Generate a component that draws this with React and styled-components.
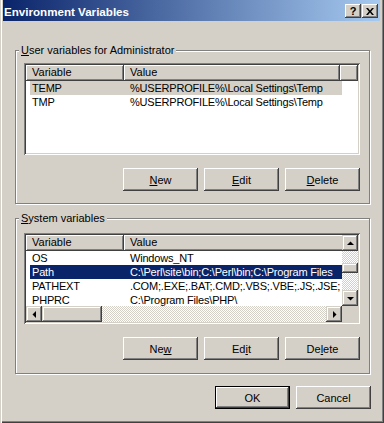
import React from "react";
import styled, { createGlobalStyle, css } from "styled-components";

const GlobalStyle = createGlobalStyle`
  html, body {
    margin: 0;
    padding: 0;
    background: #d4d0c8;
  }
  body {
    font-family: "Liberation Sans", Arial, sans-serif;
    font-size: 11px;
    color: #000;
  }
  * {
    box-sizing: border-box;
  }
`;

const raised = css`
  background: #d4d0c8;
  box-shadow: inset -1px -1px #404040, inset 1px 1px #fff,
    inset -2px -2px #808080, inset 2px 2px #d4d0c8;
`;

const scrollRaised = css`
  background: #d4d0c8;
  box-shadow: inset -1px -1px #404040, inset 1px 1px #d4d0c8,
    inset -2px -2px #808080, inset 2px 2px #fff;
`;

const Window = styled.div`
  width: 384px;
  height: 423px;
  padding: 0 4px 3px 3px;
  background: #d4d0c8;
  box-shadow: inset 1px 0 #d4d0c8, inset 2px 0 #fff, inset -1px -1px #404040,
    inset -2px -2px #808080;
  display: flex;
  flex-direction: column;
`;

const TitleBar = styled.div`
  height: 21px;
  flex: none;
  display: flex;
  align-items: center;
  padding: 3px 2px 2px 1px;
  background: linear-gradient(to right, #0a246a, #a6caf0);
`;

const Title = styled.span`
  flex: 1;
  color: #fff;
  font-weight: bold;
  font-size: 11.6px;
  white-space: nowrap;
`;

const CaptionButtons = styled.div`
  display: flex;
  gap: 1px;
`;

const CaptionButton = styled.div`
  width: 16px;
  height: 14px;
  display: flex;
  align-items: center;
  justify-content: center;
  font-weight: bold;
  font-size: 11px;
  line-height: 14px;
  color: #000;
  ${raised};
`;

const Client = styled.div`
  display: flex;
  flex-direction: column;
  padding: 29px 9px 0 12px;
`;

const Group = styled.div`
  position: relative;
  margin-right: 1px;
  padding: ${(p) => p.$top}px 9px ${(p) => p.$bottom}px 8px;
  border: 1px solid #808080;
  box-shadow: inset 1px 1px #fff, 1px 1px #fff;
  & + & {
    margin-top: 14px;
  }
`;

const Legend = styled.span`
  position: absolute;
  top: -7px;
  left: 3px;
  padding: 0 2px;
  line-height: 13px;
  background: #d4d0c8;
  white-space: nowrap;
`;

const Key = styled.span`
  text-decoration: underline;
`;

const sunken = css`
  padding: 2px;
  background: #fff;
  box-shadow: inset 1px 1px #808080, inset -1px -1px #fff, inset 2px 2px #404040,
    inset -2px -2px #d4d0c8;
`;

const ListView = styled.div`
  height: ${(p) => p.$h}px;
  display: flex;
  flex-direction: column;
  overflow: hidden;
  ${sunken};
`;

const ScrollList = styled.div`
  height: ${(p) => p.$h}px;
  display: grid;
  grid-template-columns: 1fr 16px;
  grid-template-rows: 1fr 16px;
  ${sunken};
`;

const Viewport = styled.div`
  overflow: hidden;
  min-width: 0;
`;

const Header = styled.div`
  display: flex;
  height: 16px;
`;

const HeadCell = styled.div`
  flex: ${(p) => (p.$w ? "none" : 1)};
  width: ${(p) => (p.$w ? `${p.$w}px` : "auto")};
  height: 16px;
  padding-left: 6px;
  line-height: 15px;
  white-space: nowrap;
  overflow: hidden;
  ${raised};
`;

const Row = styled.div`
  display: flex;
  width: ${(p) => p.$w}px;
  height: 14px;
  line-height: 14px;
  margin-left: 4px;
  white-space: nowrap;
  letter-spacing: -0.2px;
  background: ${(p) =>
    p.$sel === "focus" ? "#0a246a" : p.$sel ? "#d4d0c8" : "transparent"};
  color: ${(p) => (p.$sel === "focus" ? "#fff" : "#000")};
`;

const VarCell = styled.span`
  width: 94px;
  flex: none;
  padding-left: 2px;
  overflow: hidden;
`;

const ValCell = styled.span`
  padding-left: 6px;
`;

const VScroll = styled.div`
  display: flex;
  flex-direction: column;
`;

const HScroll = styled.div`
  display: flex;
`;

const Track = styled.div`
  flex: 1;
  display: flex;
  flex-direction: ${(p) => (p.$vertical ? "column" : "row")};
  background: repeating-conic-gradient(#fff 0 25%, #d4d0c8 0 50%) 0 0 / 2px 2px;
`;

const Thumb = styled.div`
  flex: none;
  ${(p) =>
    p.$vertical
      ? css`
          margin-top: ${p.$offset}px;
          height: ${p.$size}px;
        `
      : css`
          margin-left: ${p.$offset}px;
          width: ${p.$size}px;
        `}
  ${scrollRaised};
`;

const ScrollButton = styled.div`
  width: 16px;
  height: 16px;
  flex: none;
  display: flex;
  align-items: center;
  justify-content: center;
  ${scrollRaised};
`;

const Corner = styled.div`
  background: #d4d0c8;
`;

const ButtonRow = styled.div`
  display: flex;
  justify-content: flex-end;
  gap: 6px;
  margin-top: ${(p) => p.$gap}px;
`;

const Button = styled.button`
  width: 75px;
  height: 23px;
  padding: 0;
  border: none;
  font-family: "Liberation Sans", Arial, sans-serif;
  font-size: 11px;
  color: #000;
  ${raised};
  ${(p) =>
    p.$default &&
    css`
      border: 1px solid #000;
      box-shadow: inset -1px -1px #404040, inset 1px 1px #fff,
        inset -2px -2px #808080;
    `}
`;

const rotations = { up: 0, right: 90, down: 180, left: 270 };

const Arrow = ({ dir }) => (
  <svg
    width="7"
    height="7"
    viewBox="0 0 7 7"
    style={{ transform: `rotate(${rotations[dir]}deg)` }}
  >
    <path d="M3.5 1.5L7 5H0Z" fill="#000" />
  </svg>
);

const CloseGlyph = () => (
  <svg width="8" height="7" viewBox="0 0 8 7">
    <path
      d="M0 0H2L4 2.4L6 0H8L5.1 3.5L8 7H6L4 4.6L2 7H0L2.9 3.5Z"
      fill="#000"
    />
  </svg>
);

const userVars = [
  { name: "TEMP", value: "%USERPROFILE%\\Local Settings\\Temp", sel: true },
  { name: "TMP", value: "%USERPROFILE%\\Local Settings\\Temp" },
];

const systemVars = [
  { name: "OS", value: "Windows_NT" },
  {
    name: "Path",
    value: "C:\\Perl\\site\\bin;C:\\Perl\\bin;C:\\Program Files",
    sel: "focus",
  },
  { name: "PATHEXT", value: ".COM;.EXE;.BAT;.CMD;.VBS;.VBE;.JS;.JSE;" },
  { name: "PHPRC", value: "C:\\Program Files\\PHP\\" },
];

const App = () => {
  return (
    <>
      <GlobalStyle />
      <Window>
        <TitleBar>
          <Title>Environment Variables</Title>
          <CaptionButtons>
            <CaptionButton>?</CaptionButton>
            <CaptionButton>
              <CloseGlyph />
            </CaptionButton>
          </CaptionButtons>
        </TitleBar>

        <Client>
          <Group $top={12} $bottom={12}>
            <Legend>
              <Key>U</Key>ser variables for Administrator
            </Legend>
            <ListView $h={92}>
              <Header>
                <HeadCell $w={98}>Variable</HeadCell>
                <HeadCell $w={216}>Value</HeadCell>
                <HeadCell />
              </Header>
              {userVars.map((v) => (
                <Row key={v.name} $w={312} $sel={v.sel}>
                  <VarCell>{v.name}</VarCell>
                  <ValCell>{v.value}</ValCell>
                </Row>
              ))}
            </ListView>
            <ButtonRow $gap={13}>
              <Button>
                <Key>N</Key>ew
              </Button>
              <Button>
                <Key>E</Key>dit
              </Button>
              <Button>
                <Key>D</Key>elete
              </Button>
            </ButtonRow>
          </Group>

          <Group $top={14} $bottom={13}>
            <Legend>
              <Key>S</Key>ystem variables
            </Legend>
            <ScrollList $h={91}>
              <Viewport>
                <Header>
                  <HeadCell $w={98}>Variable</HeadCell>
                  <HeadCell $w={420}>Value</HeadCell>
                </Header>
                {systemVars.map((v) => (
                  <Row key={v.name} $w={520} $sel={v.sel}>
                    <VarCell>{v.name}</VarCell>
                    <ValCell>{v.value}</ValCell>
                  </Row>
                ))}
              </Viewport>
              <VScroll>
                <ScrollButton>
                  <Arrow dir="up" />
                </ScrollButton>
                <Track $vertical>
                  <Thumb $vertical $offset={12} $size={10} />
                </Track>
                <ScrollButton>
                  <Arrow dir="down" />
                </ScrollButton>
              </VScroll>
              <HScroll>
                <ScrollButton>
                  <Arrow dir="left" />
                </ScrollButton>
                <Track>
                  <Thumb $offset={0} $size={60} />
                </Track>
                <ScrollButton>
                  <Arrow dir="right" />
                </ScrollButton>
              </HScroll>
              <Corner />
            </ScrollList>
            <ButtonRow $gap={13}>
              <Button>
                Ne<Key>w</Key>
              </Button>
              <Button>
                Ed<Key>i</Key>t
              </Button>
              <Button>
                De<Key>l</Key>ete
              </Button>
            </ButtonRow>
          </Group>

          <ButtonRow $gap={12}>
            <Button $default>OK</Button>
            <Button>Cancel</Button>
          </ButtonRow>
        </Client>
      </Window>
    </>
  );
};

export default App;
